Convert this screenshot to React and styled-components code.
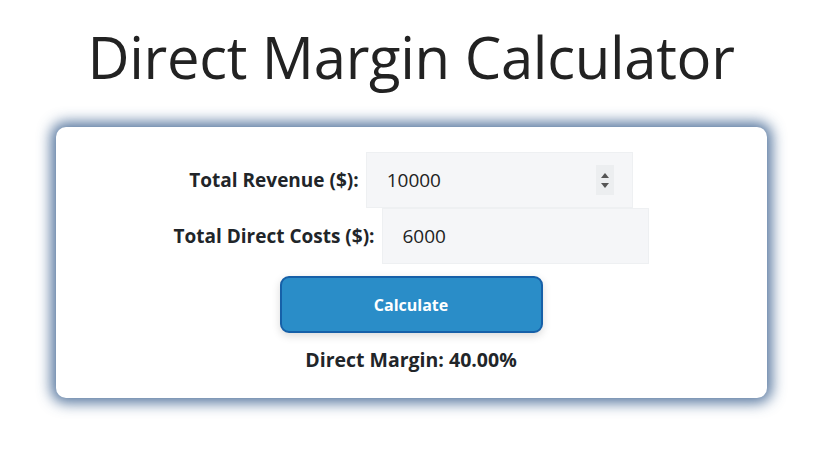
import styled, { createGlobalStyle } from 'styled-components'

const GlobalStyle = createGlobalStyle`
body {
  margin: 0;
  background: #ffffff;
  font-family: "Open Sans", "Noto Sans", sans-serif;
  color: #212529;
}
`

const Page = styled.div`
display: flex;
flex-direction: column;
align-items: center;
padding: 18px 0 40px;
`
const Title = styled.h1`
margin: 0;
font-size: 58px;
font-weight: 400;
line-height: 78px;
letter-spacing: -0.3px;
color: #222;
`
const Card = styled.div`
box-sizing: border-box;
width: 711px;
margin-top: 31px;
padding: 25px 0 25px;
background: #fff;
border-radius: 10px;
box-shadow: 0 0 14px 5px rgba(45, 85, 135, 0.8);
display: flex;
flex-direction: column;
align-items: center;
`
const Row = styled.div`
display: flex;
align-items: center;
justify-content: center;
`
const Label = styled.label`
font-weight: 700;
font-size: 19px;
margin-right: 7px;
`
const Field = styled.div`
box-sizing: border-box;
width: 267px;
height: 56px;
display: flex;
align-items: center;
padding: 0 18px 0 20px;
background: #f5f6f8;
border: 1px solid #eef0f2;
`
const Input = styled.input`
flex: 1;
min-width: 0;
border: none;
background: transparent;
font-family: inherit;
font-size: 19px;
color: #222;
padding: 0;
outline: none;
`
const Spinner = styled.span`
width: 18px;
height: 30px;
background: #eceef0;
display: flex;
flex-direction: column;
align-items: center;
justify-content: center;
gap: 5px;
`
const Arrow = styled.span`
width: 0;
height: 0;
border-left: 4.5px solid transparent;
border-right: 4.5px solid transparent;
${(p) => (p.$up ? 'border-bottom: 5px solid #555;' : 'border-top: 5px solid #555;')}
`
const Button = styled.button`
box-sizing: border-box;
width: 263px;
height: 57px;
margin-top: 12px;
background: #2a8dc8;
border: 2px solid #1660a8;
border-radius: 9px;
color: #fff;
font-family: inherit;
font-weight: 700;
font-size: 16px;
box-shadow: 0 3px 8px rgba(0, 0, 0, 0.15);
`
const Result = styled.div`
margin-top: 13px;
font-weight: 700;
font-size: 19.5px;
`

export default function App() {
  return (
    <>
      <GlobalStyle />
      <Page>
        <Title>Direct Margin Calculator</Title>
        <Card>
          <Row>
            <Label>Total Revenue ($):</Label>
            <Field>
              <Input defaultValue="10000" />
              <Spinner>
                <Arrow $up />
                <Arrow />
              </Spinner>
            </Field>
          </Row>
          <Row>
            <Label>Total Direct Costs ($):</Label>
            <Field>
              <Input defaultValue="6000" />
            </Field>
          </Row>
          <Button>Calculate</Button>
          <Result>Direct Margin: 40.00%</Result>
        </Card>
      </Page>
    </>
  )
}
